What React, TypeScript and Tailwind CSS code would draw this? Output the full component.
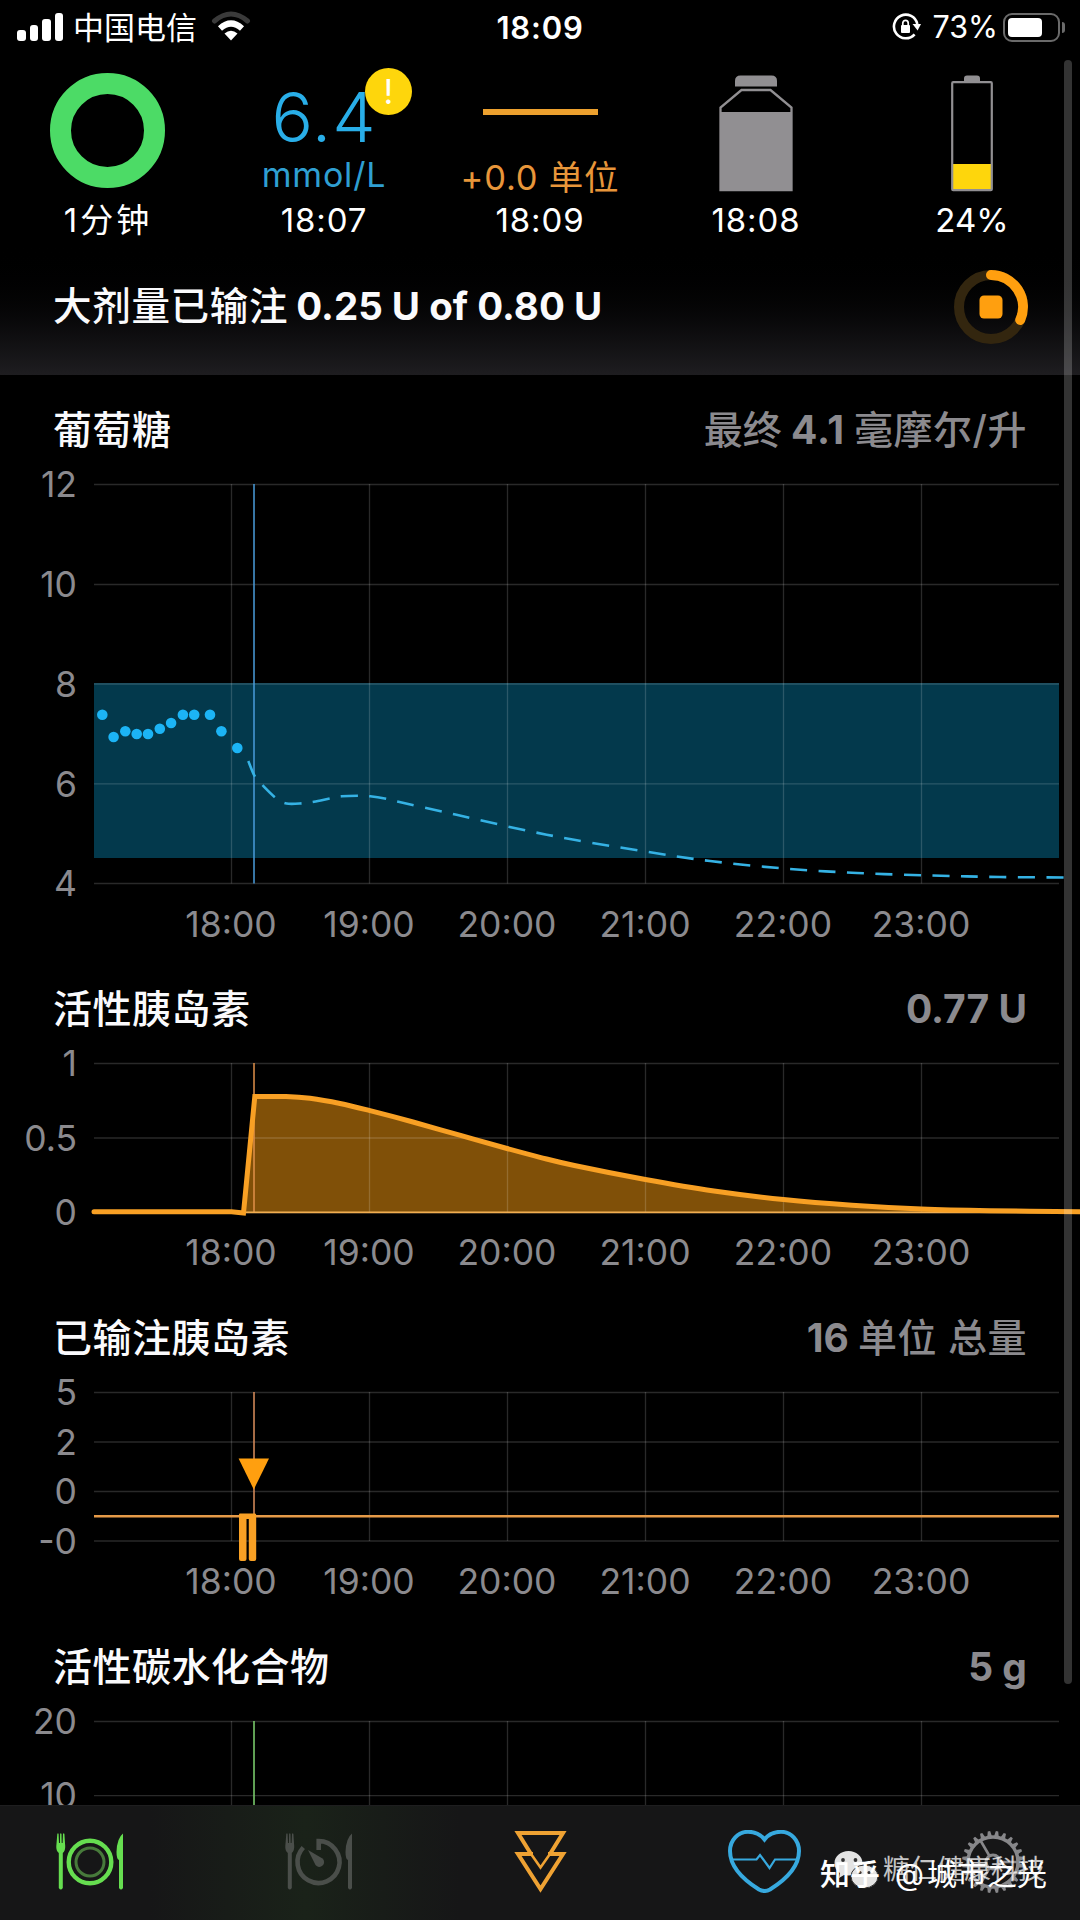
import type { ReactNode } from 'react';

const HOURS = ['18:00', '19:00', '20:00', '21:00', '22:00', '23:00'];
const HOUR_X = [231.5, 369.5, 507.5, 645.5, 783.5, 921.5];
const LEFT = 94;
const RIGHT = 1059;
const NOW_X = 254;
const ORANGE = '#f8a024';

type Tick = { label: string; y: number };
type Point = [number, number];

const GLUCOSE_DOTS: Point[] = [
  [102.3, 230.7], [113.6, 253], [125.3, 247.3], [136.7, 250], [148, 250], [159.8, 244.7],
  [171.1, 239], [182.9, 230.7], [194.2, 230.7], [210, 230.7], [221.4, 247.3], [237.3, 264],
];

const FORECAST: Point[] = [
  [248.3, 277], [255, 292.7], [263, 301.7], [275.5, 313.7], [286.5, 319.5], [302.3, 319.3],
  [314, 317.7], [330.6, 314.3], [341.6, 312.3], [358.8, 311.7], [370.2, 312.3], [387.4, 315],
  [398.4, 317.7], [444, 328], [471.8, 334.3], [527, 346.7], [575.5, 356], [645, 367.5],
  [710, 377], [784, 384.5], [857, 389], [930.6, 391.5], [1000, 393], [1073, 393.5],
];

const INSULIN: Point[] = [
  [254.8, 33.5], [286, 33.5], [310, 35.3], [340, 40.5], [370, 47.7], [413, 59], [461.4, 72.7],
  [507, 85.5], [540, 94.3], [574.4, 102.5], [645.4, 116.5], [714, 128], [783.5, 136.5],
  [852, 142.2], [921.5, 146], [990, 147.7], [1082, 148.7],
];

/** Catmull-Rom spline through the points, as cubic segments. */
function smooth(pts: Point[]) {
  let d = `${pts[0][0]} ${pts[0][1]}`;
  for (let i = 0; i < pts.length - 1; i++) {
    const a = pts[Math.max(i - 1, 0)];
    const b = pts[i];
    const c = pts[i + 1];
    const e = pts[Math.min(i + 2, pts.length - 1)];
    d += ` C${b[0] + (c[0] - a[0]) / 6} ${b[1] + (c[1] - a[1]) / 6} ${c[0] - (e[0] - b[0]) / 6} ${c[1] - (e[1] - b[1]) / 6} ${c[0]} ${c[1]}`;
  }
  return d;
}

function Grid({ ticks, bottom, now }: { ticks: Tick[]; bottom: number; now: string }) {
  return (
    <g>
      <g stroke="#ffffff" strokeOpacity="0.16" strokeWidth="1.3">
        {ticks.map((t) => (
          <line key={t.label} x1={LEFT} x2={RIGHT} y1={t.y} y2={t.y} />
        ))}
        {HOUR_X.map((x) => (
          <line key={x} x1={x} x2={x} y1={0} y2={bottom} />
        ))}
      </g>
      <line x1={NOW_X} x2={NOW_X} y1={0} y2={bottom} stroke={now} strokeWidth="1.5" />
    </g>
  );
}

function Labels({ ticks, hoursY }: { ticks: Tick[]; hoursY?: number }) {
  return (
    <g fill="#8b8a8e" fontSize="35.5">
      {ticks.map((t) => (
        <text key={t.label} x="77" y={t.y + 12.7} textAnchor="end">
          {t.label}
        </text>
      ))}
      {hoursY !== undefined &&
        HOURS.map((h, i) => (
          <text key={h} x={HOUR_X[i] - 0.5} y={hoursY} textAnchor="middle">
            {h}
          </text>
        ))}
    </g>
  );
}

function Section({ title, value, height, children }: { title: string; value: ReactNode; height: string; children: ReactNode }) {
  return (
    <section className={`flex shrink-0 flex-col ${height}`}>
      <header className="flex h-[109px] shrink-0 items-center justify-between px-[53px] pt-[2px] text-[39px]">
        <h2 className="font-medium tracking-[0.5px] text-[#fafafc]">{title}</h2>
        <span className="font-bold text-[#8b8a8e]">{value}</span>
      </header>
      <svg className="block h-px w-full grow overflow-visible">{children}</svg>
    </section>
  );
}

const T1 = [
  { label: '12', y: 0.5 }, { label: '10', y: 100.5 }, { label: '8', y: 200 },
  { label: '6', y: 299.8 }, { label: '4', y: 399.5 },
];
const T2 = [{ label: '1', y: 0.5 }, { label: '0.5', y: 75 }, { label: '0', y: 149.5 }];
const T3 = [{ label: '5', y: 0.5 }, { label: '2', y: 50 }, { label: '0', y: 99.5 }, { label: '-0', y: 149 }];
const T4 = [{ label: '20', y: 0.5 }, { label: '10', y: 74.7 }];

function StatusBar() {
  return (
    <div className="grid h-[54px] shrink-0 grid-cols-3 items-center text-[31px] leading-none text-white">
      <div className="flex items-center pl-[17px]">
        <div className="flex h-7 items-end gap-1">
          <i className="h-[11px] w-[8.5px] rounded-[3px] bg-white" />
          <i className="h-4 w-[8.5px] rounded-[3px] bg-white" />
          <i className="h-[22px] w-[8.5px] rounded-[3px] bg-white" />
          <i className="h-7 w-[8.5px] rounded-[3px] bg-white" />
        </div>
        <span className="ml-[10px]">中国电信</span>
        <svg className="ml-[14px] -mt-[3px]" width="40" height="30" viewBox="0 0 40 30" fill="none">
          <path d="M3.5 10 Q20 -4 36.5 10" stroke="#3a3a3a" strokeWidth="5" strokeLinecap="round" />
          <path d="M9 17.5 Q20 7.5 31 17.5" stroke="#fff" strokeWidth="6" />
          <path d="M13.5 22.5 Q20 17 26.5 22.5 L20 29.5Z" fill="#fff" />
        </svg>
      </div>
      <div className="text-center font-semibold tracking-[0.8px]">18:09</div>
      <div className="flex items-center justify-end pr-[15px]">
        <svg width="30" height="28" viewBox="0 0 30 28" fill="none" stroke="#fff">
          <path d="M22.6 21.3 A11.8 11.8 0 1 1 25.3 11" strokeWidth="2.6" />
          <path d="M20.5 11 H29 L25.6 17.5Z" fill="#fff" stroke="none" />
          <rect x="9" y="12" width="9" height="8" rx="1" fill="#fff" stroke="none" />
          <path d="M10.8 12.5 V10 a2.7 2.7 0 0 1 5.4 0 V12.5" strokeWidth="1.7" />
        </svg>
        <span className="ml-[10px] text-[30.5px]">73%</span>
        <div className="ml-[5px] h-[29px] w-[57px] rounded-[9px] border-2 border-[#6a6a6a] p-[3px]">
          <div className="h-[19px] w-[34px] rounded-[4px] bg-white" />
        </div>
        <div className="ml-0.5 h-[11px] w-[3px] rounded-r-full bg-[#6a6a6a]" />
      </div>
    </div>
  );
}

function HudItem({ label, spacing, children }: { label: string; spacing: string; children: ReactNode }) {
  return (
    <div className="flex flex-col items-center">
      <div className="relative flex h-[147px] w-full flex-col items-center">{children}</div>
      <span className={`text-[33px] leading-9 text-white ${spacing}`}>{label}</span>
    </div>
  );
}

function Hud() {
  return (
    <div className="grid h-[186px] shrink-0 grid-cols-5 pt-px">
      <HudItem label="1分钟" spacing="tracking-[3px]">
        <div className="mt-[18px] h-[115px] w-[115px] -translate-x-px rounded-full border-[21px] border-[#4cdb66]" />
      </HudItem>
      <HudItem label="18:07" spacing="tracking-[0.9px]">
        <span className="mt-[28px] text-[69px] leading-[68px] font-light tracking-[1px] text-[#29aee8]">6.4</span>
        <span className="mt-[6px] text-[34px] leading-9 tracking-[0.8px] text-[#2f9fd2]">mmol/L</span>
        <span className="absolute top-[13px] left-[149px] flex h-[47px] w-[47px] items-center justify-center rounded-full bg-[#fed60c] text-[34px] leading-none text-white">
          !
        </span>
      </HudItem>
      <HudItem label="18:09" spacing="tracking-[0.9px]">
        <div className="mt-[54px] h-[6px] w-[115px] bg-[#eca02e]" />
        <span className="mt-[45px] text-[34.5px] leading-9 tracking-[0.8px] whitespace-nowrap text-[#e8963a]">+0.0 单位</span>
      </HudItem>
      <HudItem label="18:08" spacing="tracking-[0.9px]">
        <svg className="mt-[20px]" width="74" height="117" viewBox="0 0 74 117">
          <path d="M16 11.5 V6 Q16 .5 21.5 .5 H52.5 Q58 .5 58 6 V11.5Z" fill="#918f92" />
          <path d="M1.5 115 V32.5 L22.5 15 H51.5 L72.5 32.5 V115Z" fill="none" stroke="#918f92" strokeWidth="2.3" />
          <rect x="1" y="37" width="72" height="79" fill="#918f92" />
        </svg>
      </HudItem>
      <HudItem label="24%" spacing="tracking-normal">
        <svg className="mt-[20px]" width="42" height="117" viewBox="0 0 42 117">
          <path d="M13 7 V3.5 Q13 .5 16 .5 H26 Q29 .5 29 3.5 V7Z" fill="#918f92" />
          <rect x="2" y="89" width="38" height="26" fill="#fed60c" />
          <rect x="1.2" y="7.2" width="39.6" height="108" rx="1" fill="none" stroke="#918f92" strokeWidth="2.2" />
        </svg>
      </HudItem>
    </div>
  );
}

function Cutlery() {
  return (
    <g stroke="none">
      <path d="M1.3 2 Q2 .5 2.6 2 L3 11 H3.9 L4.1 2 Q4.8 .5 5.5 2 L5.7 11 H6.6 L7 2 Q7.8 .5 8.4 2 L9.2 14 Q9.4 19 6.8 21 V56 Q4.8 59 2.8 56 V21 Q0 19 .3 14Z" />
      <path d="M67 1.5 V56 Q65 59 63 56 V28 Q60.5 27 60.5 20 Q61 6 67 1.5Z" />
    </g>
  );
}

function TabBar() {
  return (
    <nav className="relative flex h-[115px] shrink-0 items-center justify-between border-t border-[#1e1e1f] bg-[#161617] px-[56px] pb-[3px]">
      <div className="absolute inset-y-0 left-[150px] w-[310px] bg-linear-to-r from-transparent via-[#1a2219] to-transparent" />
      <svg className="relative" width="68" height="59" viewBox="0 0 68 59" fill="#66de50" stroke="#66de50">
        <Cutlery />
        <circle cx="34" cy="30" r="21.3" fill="none" strokeWidth="4.4" />
        <circle cx="34" cy="30" r="14" fill="none" stroke="#477a3b" strokeWidth="3" />
      </svg>
      <svg className="relative" width="68" height="59" viewBox="0 0 68 59" fill="#4a4e4a" stroke="#4a4e4a">
        <Cutlery />
        <path d="M33.7 18 V9 A21 21 0 1 1 18.3 15.5" fill="none" strokeWidth="4.6" />
        <path d="M23 18 L37.5 26.5 A4.8 4.8 0 1 1 30.5 33Z" stroke="none" />
      </svg>
      <svg width="53" height="62" viewBox="0 0 53 62" fill="none" stroke="#efa233">
        <path d="M17 23 L4 2 H49 L36 23" strokeWidth="4" />
        <path d="M16 21.5 L26.5 36.5 L37 21.5" strokeWidth="2.6" />
        <path d="M19 23 H4 L26.5 58 L49 23 H34" strokeWidth="4" />
      </svg>
      <svg width="73" height="63" viewBox="0 0 73 63" fill="none" stroke="#37a9df">
        <path
          d="M36.5 9.5 C31 2.5 24 1.8 20 1.8 C10 1.8 2 10 2 21 C2 37 15 49.5 31 59.5 Q36.5 62.5 42 59.5 C58 49.5 71 37 71 21 C71 10 63 1.8 53 1.8 C49 1.8 42 2.5 36.5 9.5Z"
          strokeWidth="4"
        />
        <path d="M4 29.5 H28.5 L32 25 L41.5 38 L47 29.5 H69" strokeWidth="2.2" />
      </svg>
      <svg width="62" height="62" viewBox="-31 -31 62 62" fill="none" stroke="#87878a">
        <circle r="25" strokeWidth="3.4" />
        <circle r="7" strokeWidth="3" />
        <path d="M-12.5 -21.5 L-3.5 -6 M7 0 H25 M-3.5 6 L-12.5 21.5" strokeWidth="2.6" />
        {Array.from({ length: 24 }, (_, i) => (
          <path key={i} d="M-2.3 -26 L-1.2 -31 H1.2 L2.3 -26Z" fill="#87878a" stroke="none" transform={`rotate(${i * 15 + 7.5})`} />
        ))}
      </svg>
    </nav>
  );
}

function Watermark() {
  return (
    <div className="absolute top-[1847px] left-[820px] h-[46px] w-[240px] whitespace-nowrap">
      <svg className="absolute top-[3px] left-[14px]" width="46" height="40" viewBox="0 0 46 40">
        <path d="M14.5 1 C22 1 28.5 6 28.5 13 C28.5 20 22 25.5 14.5 25.5 L10 25 L5 28 L6 23 C2.5 21 .5 17.5 .5 13 C.5 6 7 1 14.5 1Z" fill="#e3e3e3" />
        <ellipse cx="30.5" cy="26.5" rx="13.5" ry="11.5" fill="#e3e3e3" stroke="#333" strokeWidth="1" />
        <g fill="#333">
          <circle cx="9" cy="10" r="1.9" />
          <circle cx="21.5" cy="10" r="1.9" />
          <circle cx="26" cy="22.5" r="1.6" />
          <circle cx="35" cy="22.5" r="1.6" />
        </g>
      </svg>
      <span className="absolute top-[8px] left-[63px] text-[27px] leading-[30px] text-white/75">糖仁健康科技</span>
      <span className="absolute top-[10px] left-0 text-[30px] leading-[34px] text-white">
        <span className="font-medium">知乎</span>
        <span className="mr-[3px] ml-[15px]">@</span>城市之光
      </span>
    </div>
  );
}

export default function App() {
  const curve = smooth(INSULIN);
  return (
    <div className="relative flex h-[1920px] w-[1080px] flex-col overflow-hidden bg-black font-[Inter,'Noto_Sans_CJK_SC',sans-serif]">
      <StatusBar />
      <Hud />
      <div className="flex h-[135px] shrink-0 items-center justify-between bg-linear-to-b from-black to-[#1e1d20] pr-[52px] pb-px pl-[53px]">
        <p className="text-[38.5px] font-bold text-[#fafafc]">
          <span className="mr-[8px] font-medium tracking-[0.7px]">大剂量已输注</span>0.25 U of 0.80 U
        </p>
        <svg width="74" height="74" viewBox="-37 -37 74 74" fill="none">
          <circle r="32" stroke="#33260f" strokeWidth="10" />
          <path d="M0 -32 A32 32 0 0 1 29.2 13" stroke="#ff9f0f" strokeWidth="10" strokeLinecap="round" />
          <rect x="-11.5" y="-11.5" width="23" height="23" rx="4.5" fill="#ff9f0f" />
        </svg>
      </div>

      <main className="flex min-h-0 flex-1 flex-col overflow-hidden">
        <Section
          title="葡萄糖"
          value={
            <>
              <span className="font-medium">最终</span> <span className="tracking-[0.8px]">4.1</span>{' '}
              <span className="font-medium tracking-[0.5px]">毫摩尔/升</span>
            </>
          }
          height="h-[579px]"
        >
          <rect x={LEFT} y="199" width={RIGHT - LEFT} height="175" fill="#03394c" />
          <Grid ticks={T1} bottom={399.5} now="#4a9ddb" />
          {GLUCOSE_DOTS.map(([x, y]) => (
            <circle key={x} cx={x} cy={y} r="5.3" fill="#1cb4f5" />
          ))}
          <path d={`M${smooth(FORECAST)}`} fill="none" stroke="#35b2e4" strokeWidth="2.6" strokeDasharray="17 11.5" strokeLinejoin="round" />
          <Labels ticks={T1} hoursY={452.5} />
        </Section>

        <Section title="活性胰岛素" value="0.77 U" height="h-[329px]">
          <path d={`M243.5 149 L${curve} L1082 149Z`} fill="#805008" />
          <Grid ticks={T2} bottom={149.5} now="#e0914a" />
          <line x1="243" x2="1080" y1="149.3" y2="149.3" stroke="#f0ad50" strokeWidth="1.7" />
          <path d={`M94 148.7 H231.5 L243.5 150 L${curve}`} fill="none" stroke={ORANGE} strokeWidth="5" strokeLinecap="round" />
          <Labels ticks={T2} hoursY={202} />
        </Section>

        <Section
          title="已输注胰岛素"
          value={
            <>
              16 <span className="font-medium tracking-[0.5px]">单位 总量</span>
            </>
          }
          height="h-[329px]"
        >
          <Grid ticks={T3} bottom={149} now="#dd8f5c" />
          <line x1={LEFT} x2={RIGHT} y1="124.3" y2="124.3" stroke="#e59a48" strokeWidth="2.6" />
          <path d="M238.6 66.5 H269 L253.8 97.5Z" fill="#ff9f0f" />
          <path d="M239 122.5 Q239 121.5 240 121.5 H255 Q256.2 121.5 256.2 123 V167 Q256.2 169 254.2 169 H250.8 Q248.8 169 248.8 167 V127 H246.5 V167 Q246.5 169 244.5 169 H241 Q239 169 239 167Z" fill={ORANGE} />
          <Labels ticks={T3} hoursY={202} />
        </Section>

        <Section title="活性碳水化合物" value="5 g" height="h-[329px]">
          <Grid ticks={T4} bottom={149} now="#7fd470" />
          <Labels ticks={T4} />
        </Section>
      </main>

      <TabBar />
      <Watermark />
      <div className="absolute top-[60px] left-[1064px] h-[1624px] w-2 rounded-full bg-white/20" />
    </div>
  );
}
